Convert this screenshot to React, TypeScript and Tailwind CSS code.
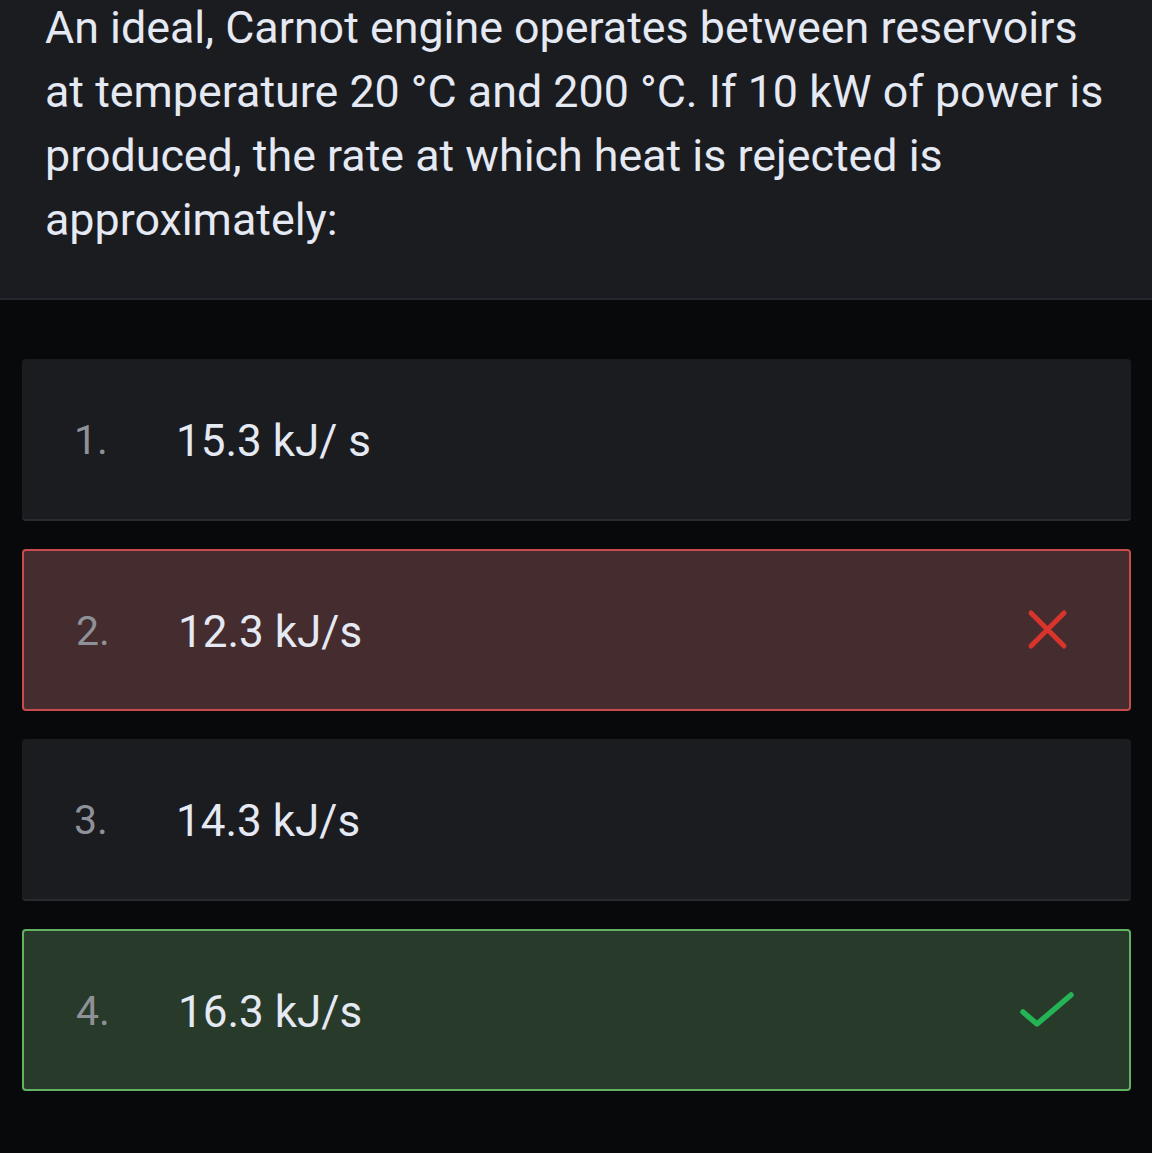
import { type ReactNode } from "react";

// -- Data ----------------------------------------------------------------------

type OptionState = "neutral" | "wrong" | "right";

interface Option {
  label: string;
  text: string;
  state: OptionState;
}

const QUESTION =
  "An ideal, Carnot engine operates between reservoirs at temperature 20 °C and 200 °C. If 10 kW of power is produced, the rate at which heat is rejected is approximately:";

const OPTIONS: Option[] = [
  { label: "1.", text: "15.3 kJ/ s", state: "neutral" },
  { label: "2.", text: "12.3 kJ/s", state: "wrong" },
  { label: "3.", text: "14.3 kJ/s", state: "neutral" },
  { label: "4.", text: "16.3 kJ/s", state: "right" },
];

const CARD_STYLES: Record<OptionState, string> = {
  neutral: "bg-[#1b1c20] border-b-2 border-[#2a2b30]",
  wrong: "bg-[#452c2e] border-2 border-[#c94b4c]",
  right: "bg-[#283a2a] border-2 border-[#63b264]",
};

// -- Icons ---------------------------------------------------------------------

const CrossIcon = () => (
  <svg width="56" height="56" viewBox="0 0 56 56" fill="none">
    <path d="M12 11 L45 44 M45 11 L12 44" stroke="#d9342b" strokeWidth="5" strokeLinecap="round" />
  </svg>
);

const CheckIcon = () => (
  <svg width="56" height="56" viewBox="0 0 56 56" fill="none">
    <path d="M4 30 L18 42 L52 13" stroke="#24b456" strokeWidth="5.5" strokeLinecap="round" strokeLinejoin="round" />
  </svg>
);

// -- Components ----------------------------------------------------------------

const OptionCard = ({ option }: { option: Option }) => {
  let icon: ReactNode = null;
  if (option.state === "wrong") icon = <CrossIcon />;
  if (option.state === "right") icon = <CheckIcon />;

  return (
    <div className={`h-[162px] rounded-[4px] flex items-center pl-[52px] pr-[54px] ${CARD_STYLES[option.state]}`}>
      <span className="w-[102px] pt-[3px] text-[41px] text-[#8f9199]">{option.label}</span>
      <span className="flex-1 pt-[3px] text-[44px] text-[#e4e9f3]">{option.text}</span>
      {icon}
    </div>
  );
};

export default function App() {
  return (
    <div className="min-h-[1153px] w-full bg-[#08090b] font-['Roboto','Liberation_Sans',sans-serif] overflow-hidden">
      <div className="bg-[#1b1c20] border-b-2 border-[#26272c] px-[45px] pb-[46px]">
        <p className="-mt-[4px] text-[44.8px] leading-[64px] text-[#e4e9f3]">{QUESTION}</p>
      </div>
      <div className="flex flex-col gap-[28px] px-[22px] pt-[59px] pb-[60px] pr-[21px]">
        {OPTIONS.map((o) => (
          <OptionCard key={o.label} option={o} />
        ))}
      </div>
    </div>
  );
}
